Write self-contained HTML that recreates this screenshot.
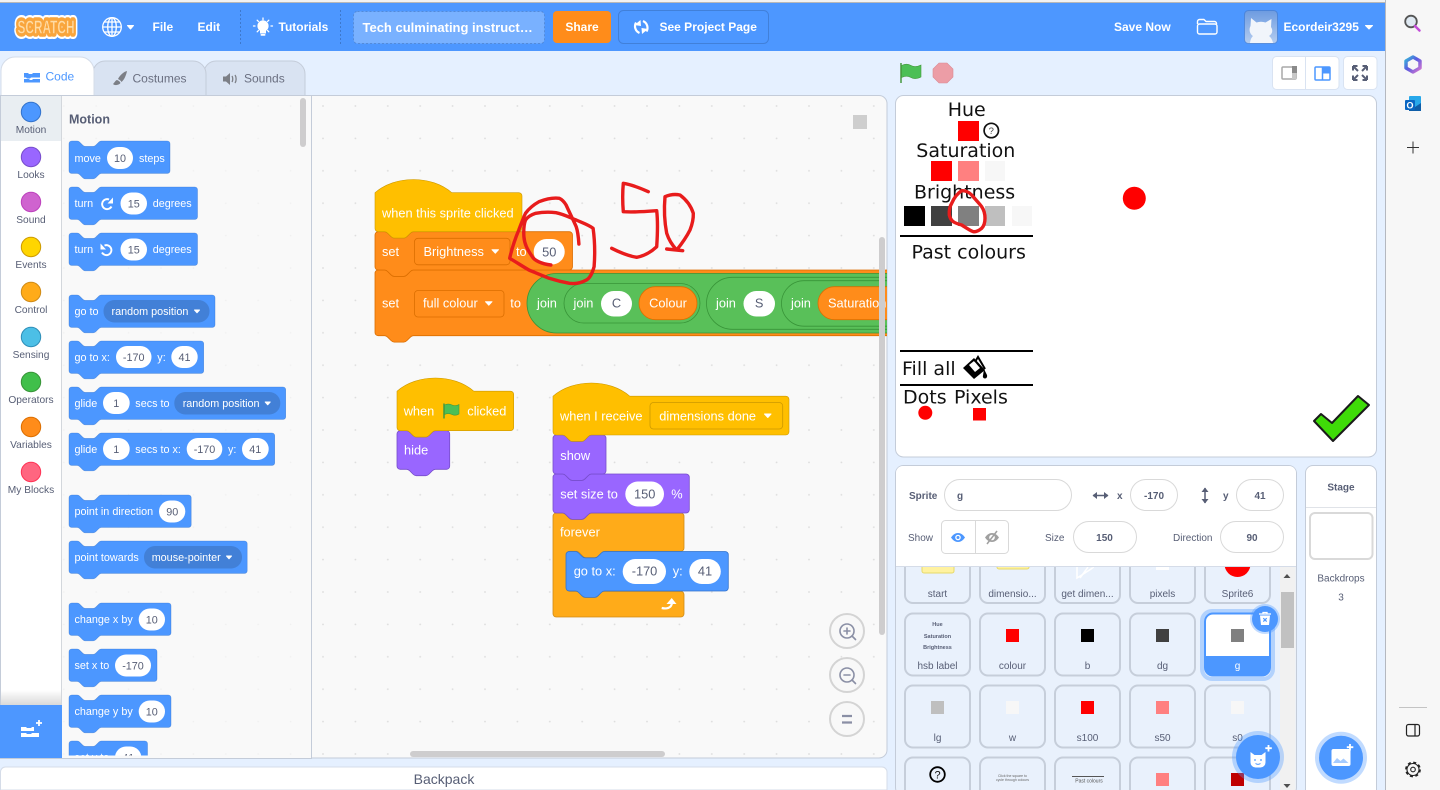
<!DOCTYPE html>
<html lang="en"><head><meta charset="utf-8"><title>Scratch Editor</title>
<style>
html,body{margin:0;padding:0;width:1440px;height:790px;overflow:hidden;background:#e5f0ff}
svg{display:block;position:absolute;left:0;top:0}
text{font-family:"Liberation Sans",Arial,sans-serif}
.h{font-size:12px;font-weight:700;fill:#fff}
.c{font-size:10.2px;fill:#575e75;text-anchor:middle}
.f{font-size:10.8px;fill:#fff}
.fn{font-size:10.8px;fill:#575e75;text-anchor:middle}
.w{font-size:12.8px;fill:#fff}
.wn{font-size:12.8px;fill:#575e75;text-anchor:middle}
.m{fill:#4c97ff;stroke:#3373cc;stroke-width:.6;stroke-opacity:.6}
.o{fill:#fff}
.dd{fill:#4280d7}
.ar{fill:#fff;stroke:#fff;stroke-width:1;stroke-linejoin:round}
.s{font-family:"DejaVu Sans",sans-serif;font-size:19px;fill:#111}
.l{font-size:10px;fill:#575e75}
.lb{font-size:10px;fill:#575e75;font-weight:700}
.lc{font-size:10px;fill:#575e75;text-anchor:middle}
.vb{font-size:10px;fill:#575e75;font-weight:700;text-anchor:middle}
.in{fill:#fff;stroke:#d9d9d9;stroke-width:1}
.t{fill:#e9f1fc;stroke:#c6ceda;stroke-width:2}
.red{fill:none;stroke:#e81c1c;stroke-width:3.4;stroke-linejoin:round;stroke-linecap:round}
</style></head><body>
<svg width="1440" height="790" viewBox="0 0 1440 790" xmlns="http://www.w3.org/2000/svg">
<defs>
<pattern id="d" x="322" y="105" width="32.4" height="32.4" patternUnits="userSpaceOnUse"><circle cx="1" cy="1" r=".9" fill="#dcdcdc"/></pattern>
<pattern id="d2" x="322" y="105" width="32.4" height="32.4" patternUnits="userSpaceOnUse"><circle cx="1" cy="1" r=".8" fill="#efefef"/></pattern>
<clipPath id="cf"><rect x="62" y="96" width="249" height="659.5"/></clipPath>
<clipPath id="cw"><path d="M312 96H879a8 8 0 0 1 8 8V750a8 8 0 0 1-8 8H312z"/></clipPath>
<clipPath id="cl"><rect x="896" y="567" width="400" height="223"/></clipPath>
<linearGradient id="sh" x1="0" y1="0" x2="0" y2="1"><stop offset="0" stop-color="#000" stop-opacity="0"/><stop offset="1" stop-color="#000" stop-opacity=".15"/></linearGradient>
<linearGradient id="av" x1="0" y1="0" x2="0" y2="1"><stop offset="0" stop-color="#6d9be0"/><stop offset="1" stop-color="#b5cdf0"/></linearGradient>
<linearGradient id="cp" x1="0" y1="0" x2="1" y2="1"><stop offset="0" stop-color="#35b8d8"/><stop offset=".45" stop-color="#5a5be0"/><stop offset="1" stop-color="#d878d0"/></linearGradient>
</defs>

<rect width="1440" height="790" fill="#e5f0ff"/>
<rect x="0" y="0" width="1385" height="2" fill="#f2f2f2"/>
<rect x="0" y="2" width="1385" height="1" fill="#b8b8b8"/>
<rect x="0" y="3" width="1385" height="48" fill="#4d97ff"/>
<rect x="1386" y="0" width="54" height="790" fill="#f7f7f7"/>
<rect x="1385" y="0" width="1" height="790" fill="#b4b8c0"/>

<!-- logo -->
<g font-size="18" font-weight="700" text-anchor="middle">
<text x="46" y="33.5" textLength="57" lengthAdjust="spacingAndGlyphs" fill="#fff" stroke="#fff" stroke-width="11" stroke-linejoin="round">SCRATCH</text>
<text x="46" y="33.5" textLength="57" lengthAdjust="spacingAndGlyphs" fill="#f9a53c" stroke="#f9a53c" stroke-width="6.5" stroke-linejoin="round">SCRATCH</text>
<text x="46" y="33.5" textLength="57" lengthAdjust="spacingAndGlyphs" fill="#ffdca6" stroke="#f9a53c" stroke-width=".5">SCRATCH</text>
</g>
<!-- globe -->
<g fill="none" stroke="#fff" stroke-width="1.3"><circle cx="112" cy="27" r="9.3"/><ellipse cx="112" cy="27" rx="4.3" ry="9.3"/><path d="M112 17.7V36.3M102.7 27H121.3M104 22h16M104 32h16"/></g>
<path d="M127.5 25.5h6l-3 3.5z" class="ar"/>
<text x="152.5" y="31" class="h">File</text>
<text x="197.5" y="31" class="h">Edit</text>
<path d="M240.5 10V44M340.5 10V44" stroke="#000" stroke-opacity=".2" stroke-dasharray="2 2"/>
<!-- bulb -->
<g fill="#fff"><circle cx="263" cy="26" r="5.6"/><path d="M260 30h6v3.5h-6z"/><rect x="260.5" y="34" width="5" height="1.8" rx=".9"/></g>
<path d="M263 18v1.8M255 26h-1.5M272.5 26H271M257.2 20.2l1.2 1.2M268.8 20.2l-1.2 1.2M257.2 31.8l1.2-1.2M268.8 31.8l-1.2-1.2" stroke="#fff" stroke-width="1.3" stroke-linecap="round"/>
<text x="278.5" y="31" class="h">Tutorials</text>
<rect x="353.5" y="11.5" width="191" height="32" rx="4" fill="#fff" fill-opacity=".25" stroke="#000" stroke-opacity=".15" stroke-dasharray="2 2"/>
<text x="362.5" y="32" font-size="13px" font-weight="700" fill="#fff">Tech culminating instruct…</text>
<rect x="553" y="11" width="58" height="32" rx="4" fill="#ff8c1a"/>
<text x="582" y="31" class="h" text-anchor="middle">Share</text>
<rect x="618.5" y="10.5" width="150" height="33" rx="5" fill="#4d97ff" stroke="#000" stroke-opacity=".15"/>
<path d="M639.5 33c-4.500-2-5.500-7-3.500-10.500" fill="none" stroke="#fff" stroke-width="2.200"/><path d="M634.500 25l6-5 .5 6z" fill="#fff"/>
<path d="M643 21c4.500 2 5.500 7 3.500 10.500" fill="none" stroke="#fff" stroke-width="2.200"/><path d="M648 29l-6 5-.5-6z" fill="#fff"/>
<text x="659.5" y="31" class="h">See Project Page</text>
<text x="1114" y="31" class="h">Save Now</text>
<g fill="none" stroke="#fff" stroke-width="1.4" stroke-linejoin="round"><path d="M1197.500 24v-2.500a2 2 0 0 1 2-2h4.500l2 2h8.500a2 2 0 0 1 2 2V24"/><rect x="1197.500" y="24" width="19.500" height="10" rx="2"/></g>
<rect x="1244.500" y="10.500" width="33" height="33" rx="4" fill="url(#av)" stroke="#3f77c9" stroke-opacity=".6"/>
<path d="M1251 18l5.500 4.500c3-1 6-1 9 0l6-3.500-.5 8c2.500 4 1 7-2 9 2 1.500 3.500 4 4 7h-23c.5-3 1-5 3-7-3-2-4.500-6-2.500-10z" fill="#f1f5fb"/>
<text x="1283.500" y="31" class="h">Ecordeir3295</text>
<path d="M1365.500 25.500h7l-3.500 3.500z" class="ar"/>

<!-- tabs -->
<path d="M204 96V73a12 12 0 0 1 12-12h76a13 13 0 0 1 13 13V96z" fill="#d9e3f2" stroke="#c4ccd9"/>
<path d="M93 96V73a12 12 0 0 1 12-12h88a13 13 0 0 1 13 13V96z" fill="#d9e3f2" stroke="#c4ccd9"/>
<path d="M1 96V71a14 14 0 0 1 14-14h65a14 14 0 0 1 14 14V96z" fill="#fff" stroke="#d5dce8"/>
<path d="M24 73h4l1 1h3l1-1h7v4.500h-9l-1 1h-3l-1-1h-2zM24 79h5l1 1h2l1-1h7v3.500H24z" fill="#4c97ff"/>
<text x="45.500" y="80.500" font-size="12px" fill="#4c97ff">Code</text>
<path d="M127 71c-3 .5-7 4-9 8 2 1 3 2 3.500 3 2.500-2 4.500-6 5.500-11zM117 80c-2 .5-2.500 3-4 4 2 2 6 1 7.500-1-.5-1.500-2-2.500-3.500-3z" fill="#7c7f86"/>
<text x="132.500" y="82.500" font-size="12px" fill="#6a6f80">Costumes</text>
<path d="M223 76.500h3l4-3.500v12l-4-3.500h-3z" fill="#7c7f86"/><path d="M232 76c1 1.500 1 4.500 0 6M235 75c1.500 2 1.500 6 0 8" stroke="#7c7f86" stroke-width="1.300" fill="none"/>
<text x="244" y="82.500" font-size="12px" fill="#6a6f80">Sounds</text>

<!-- palette -->
<rect x="0.500" y="95.500" width="311" height="663" fill="#f9f9f9" stroke="#c4ccd9"/>
<rect x="62" y="96" width="249" height="662" fill="url(#d2)"/>
<rect x="1" y="96" width="60" height="609" fill="#fff"/>
<rect x="1" y="96" width="60" height="45" fill="#e9eef2"/>
<rect x="1" y="690" width="60" height="15" fill="url(#sh)"/>
<rect x="61" y="96" width="1" height="662" fill="#d3d7dc"/>
<rect x="0" y="705" width="62" height="53" fill="#4d97ff"/>
<path d="M21 727h5l1 1h4l1-1h2v4H21zM21 733h5l1 1h4l1-1h7v4H21z" fill="#fff"/><path d="M39 720v6M36 723h6" stroke="#fff" stroke-width="1.800"/>
<g stroke-width="1">
<circle cx="31" cy="112" r="9.700" fill="#4c97ff" stroke="#3373cc"/>
<circle cx="31" cy="157" r="9.700" fill="#9966ff" stroke="#774dcb"/>
<circle cx="31" cy="202" r="9.700" fill="#cf63cf" stroke="#bd42bd"/>
<circle cx="31" cy="247" r="9.700" fill="#ffd500" stroke="#cc9900"/>
<circle cx="31" cy="292" r="9.700" fill="#ffab19" stroke="#cf8b17"/>
<circle cx="31" cy="337" r="9.700" fill="#4cbfe6" stroke="#2e8eb8"/>
<circle cx="31" cy="382" r="9.700" fill="#40bf4a" stroke="#389438"/>
<circle cx="31" cy="427" r="9.700" fill="#ff8c1a" stroke="#db6e00"/>
<circle cx="31" cy="472" r="9.700" fill="#ff6680" stroke="#ff3355"/>
</g>
<text x="31" y="133" class="c">Motion</text><text x="31" y="178" class="c">Looks</text><text x="31" y="223" class="c">Sound</text><text x="31" y="268" class="c">Events</text><text x="31" y="313" class="c">Control</text><text x="31" y="358" class="c">Sensing</text><text x="31" y="403" class="c">Operators</text><text x="31" y="448" class="c">Variables</text><text x="31" y="493" class="c">My Blocks</text>

<!-- flyout -->
<g clip-path="url(#cf)">
<text x="69" y="123.500" font-size="12.500px" font-weight="700" fill="#575e75">Motion</text>
<g id="fb">
<path class="m" transform="translate(69,141)" d="M0 2.700a2.700 2.700 0 0 1 2.700-2.700h5.400c1.300 0 2 .7 2.700 1.300l2.700 2.700c.7.7 1.300 1.400 2.700 1.400h8.100c1.400 0 2-.7 2.700-1.400l2.700-2.700c.7-.6 1.400-1.300 2.700-1.300H98.300a2.700 2.700 0 0 1 2.700 2.700V29.700a2.700 2.700 0 0 1-2.700 2.700H32.400c-1.300 0-2 .7-2.700 1.300l-2.700 2.700c-.7.7-1.400 1.400-2.700 1.400h-8.100c-1.400 0-2-.7-2.700-1.400l-2.700-2.700c-.7-.6-1.400-1.300-2.700-1.300H2.700a2.700 2.700 0 0 1-2.700-2.700z"/>
<path class="m" transform="translate(69,187)" d="M0 2.700a2.700 2.700 0 0 1 2.700-2.700h5.400c1.300 0 2 .7 2.700 1.300l2.700 2.700c.7.7 1.300 1.400 2.700 1.400h8.100c1.400 0 2-.7 2.700-1.400l2.700-2.700c.7-.6 1.400-1.300 2.700-1.300H125.800a2.700 2.700 0 0 1 2.700 2.700V29.700a2.700 2.700 0 0 1-2.700 2.700H32.400c-1.300 0-2 .7-2.700 1.300l-2.700 2.700c-.7.7-1.400 1.400-2.700 1.400h-8.100c-1.400 0-2-.7-2.700-1.400l-2.700-2.700c-.7-.6-1.400-1.300-2.700-1.300H2.700a2.700 2.700 0 0 1-2.700-2.700z"/>
<path class="m" transform="translate(69,233)" d="M0 2.700a2.700 2.700 0 0 1 2.700-2.700h5.400c1.300 0 2 .7 2.700 1.300l2.700 2.700c.7.7 1.300 1.400 2.700 1.400h8.100c1.400 0 2-.7 2.700-1.400l2.700-2.700c.7-.6 1.400-1.300 2.700-1.300H125.800a2.700 2.700 0 0 1 2.700 2.700V29.700a2.700 2.700 0 0 1-2.700 2.700H32.400c-1.300 0-2 .7-2.700 1.300l-2.700 2.700c-.7.7-1.400 1.400-2.700 1.400h-8.100c-1.400 0-2-.7-2.700-1.400l-2.700-2.700c-.7-.6-1.400-1.300-2.700-1.300H2.700a2.700 2.700 0 0 1-2.700-2.700z"/>
<path class="m" transform="translate(69,295)" d="M0 2.700a2.700 2.700 0 0 1 2.700-2.700h5.400c1.300 0 2 .7 2.700 1.300l2.700 2.700c.7.7 1.300 1.400 2.700 1.400h8.100c1.400 0 2-.7 2.700-1.400l2.700-2.700c.7-.6 1.400-1.300 2.700-1.300H143.300a2.700 2.700 0 0 1 2.700 2.700V29.700a2.700 2.700 0 0 1-2.700 2.700H32.400c-1.300 0-2 .7-2.700 1.300l-2.700 2.700c-.7.7-1.400 1.400-2.700 1.400h-8.100c-1.400 0-2-.7-2.700-1.400l-2.700-2.700c-.7-.6-1.400-1.300-2.700-1.300H2.700a2.700 2.700 0 0 1-2.700-2.700z"/>
<path class="m" transform="translate(69,341)" d="M0 2.700a2.700 2.700 0 0 1 2.700-2.700h5.400c1.300 0 2 .7 2.700 1.300l2.700 2.700c.7.7 1.300 1.400 2.700 1.400h8.100c1.400 0 2-.7 2.700-1.400l2.700-2.700c.7-.6 1.400-1.300 2.700-1.300H132a2.700 2.700 0 0 1 2.700 2.700V29.700a2.700 2.700 0 0 1-2.700 2.700H32.400c-1.300 0-2 .7-2.700 1.300l-2.700 2.700c-.7.7-1.400 1.400-2.700 1.400h-8.100c-1.400 0-2-.7-2.700-1.400l-2.700-2.700c-.7-.6-1.400-1.300-2.700-1.300H2.700a2.700 2.700 0 0 1-2.700-2.700z"/>
<path class="m" transform="translate(69,387)" d="M0 2.700a2.700 2.700 0 0 1 2.700-2.700h5.400c1.300 0 2 .7 2.700 1.300l2.700 2.700c.7.7 1.300 1.400 2.700 1.400h8.100c1.400 0 2-.7 2.700-1.400l2.700-2.700c.7-.6 1.400-1.300 2.700-1.300H214a2.700 2.700 0 0 1 2.700 2.700V29.700a2.700 2.700 0 0 1-2.700 2.700H32.400c-1.300 0-2 .7-2.700 1.300l-2.700 2.700c-.7.7-1.400 1.400-2.700 1.400h-8.100c-1.400 0-2-.7-2.700-1.400l-2.700-2.700c-.7-.6-1.400-1.300-2.700-1.300H2.700a2.700 2.700 0 0 1-2.700-2.700z"/>
<path class="m" transform="translate(69,433)" d="M0 2.700a2.700 2.700 0 0 1 2.700-2.700h5.400c1.300 0 2 .7 2.700 1.300l2.700 2.700c.7.7 1.300 1.400 2.700 1.400h8.100c1.400 0 2-.7 2.700-1.400l2.700-2.700c.7-.6 1.400-1.300 2.700-1.300H203a2.700 2.700 0 0 1 2.700 2.700V29.700a2.700 2.700 0 0 1-2.700 2.700H32.400c-1.300 0-2 .7-2.700 1.300l-2.700 2.700c-.7.7-1.400 1.400-2.700 1.400h-8.100c-1.400 0-2-.7-2.700-1.400l-2.700-2.700c-.7-.6-1.400-1.300-2.700-1.300H2.700a2.700 2.700 0 0 1-2.700-2.700z"/>
<path class="m" transform="translate(69,495)" d="M0 2.700a2.700 2.700 0 0 1 2.700-2.700h5.400c1.300 0 2 .7 2.700 1.300l2.700 2.700c.7.7 1.300 1.400 2.700 1.400h8.100c1.400 0 2-.7 2.700-1.400l2.700-2.700c.7-.6 1.400-1.300 2.700-1.300H119.500a2.700 2.700 0 0 1 2.700 2.700V29.700a2.700 2.700 0 0 1-2.700 2.700H32.400c-1.300 0-2 .7-2.700 1.300l-2.700 2.700c-.7.7-1.400 1.400-2.700 1.400h-8.100c-1.400 0-2-.7-2.700-1.400l-2.700-2.700c-.7-.6-1.400-1.300-2.700-1.300H2.700a2.700 2.700 0 0 1-2.700-2.700z"/>
<path class="m" transform="translate(69,541)" d="M0 2.700a2.700 2.700 0 0 1 2.700-2.700h5.400c1.300 0 2 .7 2.700 1.300l2.700 2.700c.7.7 1.300 1.400 2.700 1.400h8.100c1.400 0 2-.7 2.700-1.400l2.700-2.700c.7-.6 1.400-1.300 2.700-1.300H175.500a2.700 2.700 0 0 1 2.700 2.700V29.700a2.700 2.700 0 0 1-2.700 2.700H32.400c-1.300 0-2 .7-2.700 1.300l-2.700 2.700c-.7.7-1.400 1.400-2.700 1.400h-8.100c-1.400 0-2-.7-2.700-1.400l-2.700-2.700c-.7-.6-1.400-1.300-2.700-1.300H2.700a2.700 2.700 0 0 1-2.700-2.700z"/>
<path class="m" transform="translate(69,603)" d="M0 2.700a2.700 2.700 0 0 1 2.700-2.700h5.400c1.300 0 2 .7 2.700 1.300l2.700 2.700c.7.7 1.300 1.400 2.700 1.400h8.100c1.400 0 2-.7 2.700-1.400l2.700-2.700c.7-.6 1.400-1.300 2.700-1.300H99.300a2.700 2.700 0 0 1 2.700 2.700V29.700a2.700 2.700 0 0 1-2.700 2.700H32.400c-1.300 0-2 .7-2.700 1.300l-2.700 2.700c-.7.7-1.400 1.400-2.700 1.400h-8.100c-1.400 0-2-.7-2.700-1.400l-2.700-2.700c-.7-.6-1.400-1.300-2.700-1.300H2.700a2.700 2.700 0 0 1-2.700-2.700z"/>
<path class="m" transform="translate(69,649)" d="M0 2.700a2.700 2.700 0 0 1 2.700-2.700h5.400c1.300 0 2 .7 2.700 1.300l2.700 2.700c.7.7 1.300 1.400 2.700 1.400h8.100c1.400 0 2-.7 2.700-1.400l2.700-2.700c.7-.6 1.400-1.300 2.700-1.300H85.300a2.700 2.700 0 0 1 2.700 2.700V29.700a2.700 2.700 0 0 1-2.700 2.700H32.400c-1.300 0-2 .7-2.700 1.300l-2.700 2.700c-.7.7-1.400 1.400-2.700 1.400h-8.100c-1.400 0-2-.7-2.700-1.400l-2.700-2.700c-.7-.6-1.400-1.300-2.700-1.300H2.700a2.700 2.700 0 0 1-2.700-2.700z"/>
<path class="m" transform="translate(69,695)" d="M0 2.700a2.700 2.700 0 0 1 2.700-2.700h5.400c1.300 0 2 .7 2.700 1.300l2.700 2.700c.7.7 1.300 1.400 2.700 1.400h8.100c1.400 0 2-.7 2.700-1.400l2.700-2.700c.7-.6 1.400-1.300 2.700-1.300H99.300a2.700 2.700 0 0 1 2.700 2.700V29.700a2.700 2.700 0 0 1-2.700 2.700H32.400c-1.300 0-2 .7-2.700 1.300l-2.700 2.700c-.7.7-1.400 1.400-2.700 1.400h-8.100c-1.400 0-2-.7-2.700-1.400l-2.700-2.700c-.7-.6-1.400-1.300-2.700-1.300H2.700a2.700 2.700 0 0 1-2.700-2.700z"/>
<path class="m" transform="translate(69,741)" d="M0 2.700a2.700 2.700 0 0 1 2.700-2.700h5.400c1.300 0 2 .7 2.700 1.300l2.700 2.700c.7.7 1.300 1.400 2.700 1.400h8.100c1.400 0 2-.7 2.700-1.400l2.700-2.700c.7-.6 1.400-1.300 2.700-1.300H75.800a2.700 2.700 0 0 1 2.700 2.700V29.700a2.700 2.700 0 0 1-2.700 2.700H2.700a2.700 2.700 0 0 1-2.700-2.700z"/>
</g>
<!-- move -->
<text x="74.500" y="162" class="f">move</text><rect class="o" x="107" y="147" width="26" height="22" rx="11"/><text x="120" y="162" class="fn">10</text><text x="139" y="162" class="f">steps</text>
<!-- turn -->
<text x="74.500" y="207" class="f">turn</text>
<path d="M111.500 206.500a5 5 0 1 1-2.500-7" fill="none" stroke="#fff" stroke-width="1.900"/><path d="M113 197.500v6h-5.500z" fill="#fff"/>
<rect class="o" x="120.500" y="192.500" width="26.500" height="22" rx="11"/><text x="133.700" y="207.500" class="fn">15</text><text x="152.700" y="207" class="f">degrees</text>
<text x="74.500" y="253" class="f">turn</text>
<path d="M102 252.500a5 5 0 1 0 2.500-7" fill="none" stroke="#fff" stroke-width="1.900"/><path d="M100.500 243.500v6h5.500z" fill="#fff"/>
<rect class="o" x="120.500" y="238.500" width="26.500" height="22" rx="11"/><text x="133.700" y="253.500" class="fn">15</text><text x="152.700" y="253" class="f">degrees</text>
<!-- go to -->
<text x="74.500" y="315" class="f">go to</text><rect class="dd" x="103.500" y="300" width="106" height="22.500" rx="11"/><text x="111.500" y="315" class="f">random position</text><path class="ar" d="M194.500 310h5l-2.500 2.800z"/>
<text x="74.500" y="361" class="f">go to x:</text><rect class="o" x="116" y="346" width="35.500" height="22" rx="11"/><text x="133.700" y="361" class="fn">-170</text><text x="157.300" y="361" class="f">y:</text><rect class="o" x="171.300" y="346" width="26.400" height="22" rx="11"/><text x="184.500" y="361" class="fn">41</text>
<text x="74.500" y="407" class="f">glide</text><rect class="o" x="103" y="392" width="26.700" height="22" rx="11"/><text x="116.300" y="407" class="fn">1</text><text x="135.300" y="407" class="f">secs to</text><rect class="dd" x="174.300" y="392" width="106" height="22.500" rx="11"/><text x="182.700" y="407" class="f">random position</text><path class="ar" d="M265.200 402h5l-2.500 2.800z"/>
<text x="74.500" y="453" class="f">glide</text><rect class="o" x="103" y="438" width="26.700" height="22" rx="11"/><text x="116.300" y="453" class="fn">1</text><text x="135.300" y="453" class="f">secs to x:</text><rect class="o" x="186.700" y="438" width="35.600" height="22" rx="11"/><text x="204.500" y="453" class="fn">-170</text><text x="228" y="453" class="f">y:</text><rect class="o" x="242" y="438" width="26.700" height="22" rx="11"/><text x="255.300" y="453" class="fn">41</text>
<text x="74.500" y="515" class="f">point in direction</text><rect class="o" x="159" y="500.500" width="26.300" height="22" rx="11"/><text x="172.200" y="515.500" class="fn">90</text>
<text x="74.500" y="561" class="f">point towards</text><rect class="dd" x="144" y="546" width="98" height="22.500" rx="11"/><text x="151.700" y="561" class="f">mouse-pointer</text><path class="ar" d="M226.500 556h5l-2.500 2.800z"/>
<text x="74.500" y="623" class="f">change x by</text><rect class="o" x="138.700" y="608.500" width="26.300" height="22" rx="11"/><text x="151.800" y="623.500" class="fn">10</text>
<text x="74.500" y="669" class="f">set x to</text><rect class="o" x="115" y="654.500" width="36" height="22" rx="11"/><text x="133" y="669.500" class="fn">-170</text>
<text x="74.500" y="715" class="f">change y by</text><rect class="o" x="138.700" y="700.500" width="26.300" height="22" rx="11"/><text x="151.800" y="715.500" class="fn">10</text>
<text x="74.500" y="761" class="f">set y to</text><rect class="o" x="115" y="746.500" width="26.300" height="22" rx="11"/><text x="128.200" y="761.500" class="fn">41</text>
</g>
<rect x="300" y="98" width="6" height="49" rx="3" fill="#cecdce"/>

<!-- workspace -->
<path d="M311.500 95.500H879a8 8 0 0 1 8 8V750a8 8 0 0 1-8 8H311.500z" fill="#f9f9f9" stroke="#c4ccd9"/>
<g clip-path="url(#cw)">
<rect x="312" y="96" width="575" height="662" fill="url(#d)"/>
<rect x="853" y="115" width="14" height="14" fill="#cecece"/>
<!-- set full colour -->
<path transform="translate(375,270)" fill="#ff8c1a" stroke="#db6e00" stroke-width=".8" d="M0 3.200a3.200 3.200 0 0 1 3.200-3.200h6.400c1.600 0 2.400.8 3.200 1.600l3.200 3.200c.8.8 1.600 1.600 3.200 1.600h9.600c1.600 0 2.400-.8 3.200-1.600l3.200-3.200c.8-.8 1.600-1.600 3.200-1.600H600V65.700H38.400c-1.600 0-2.400.8-3.200 1.600l-3.200 3.200c-.8.8-1.600 1.600-3.200 1.600h-9.600c-1.600 0-2.400-.8-3.200-1.600l-3.200-3.200c-.8-.8-1.600-1.600-3.200-1.600H3.200a3.200 3.200 0 0 1-3.200-3.200z"/>
<text x="382" y="307.700" class="w">set</text>
<rect x="414.500" y="290.500" width="89.500" height="26.500" rx="3.500" fill="#ff8c1a" stroke="#db6e00" stroke-width=".8"/>
<text x="423" y="307.700" class="w">full colour</text><path class="ar" d="M485.500 301.700h6.500l-3.200 3.500z"/>
<text x="510.300" y="307.700" class="w">to</text>
<rect x="527" y="273.500" width="500" height="59.500" rx="29.700" fill="#59c059" stroke="#389438" stroke-width=".8"/>
<text x="537" y="307.700" class="w">join</text>
<rect x="564" y="283.500" width="136" height="39.500" rx="19.700" fill="#59c059" stroke="#389438" stroke-width=".8"/>
<text x="573.500" y="307.700" class="w">join</text>
<rect x="601" y="291" width="31" height="25.500" rx="12.700" fill="#fff"/><text x="616.500" y="307.700" class="wn">C</text>
<rect x="639" y="286.700" width="58" height="33" rx="16.500" fill="#ff8c1a" stroke="#db6e00" stroke-width=".8"/><text x="668" y="307.700" class="w" text-anchor="middle">Colour</text>
<rect x="706.500" y="277.300" width="400" height="52" rx="26" fill="#59c059" stroke="#389438" stroke-width=".8"/>
<text x="716" y="307.700" class="w">join</text>
<rect x="743.500" y="291" width="31.500" height="25.500" rx="12.700" fill="#fff"/><text x="759.200" y="307.700" class="wn">S</text>
<rect x="781.500" y="280.700" width="400" height="45.500" rx="22.700" fill="#59c059" stroke="#389438" stroke-width=".8"/>
<text x="791" y="307.700" class="w">join</text>
<rect x="818" y="286.700" width="200" height="33" rx="16.500" fill="#ff8c1a" stroke="#db6e00" stroke-width=".8"/><text x="828" y="307.700" class="w">Saturation</text>
<!-- set brightness -->
<path transform="translate(375,231.700)" fill="#ff8c1a" stroke="#db6e00" stroke-width=".8" d="M0 3.200a3.200 3.200 0 0 1 3.200-3.200h6.400c1.600 0 2.400.8 3.200 1.600l3.200 3.200c.8.8 1.600 1.600 3.200 1.600h9.600c1.600 0 2.400-.8 3.200-1.600l3.200-3.200c.8-.8 1.600-1.600 3.200-1.600H194.300a3.200 3.200 0 0 1 3.200 3.200V35.100a3.200 3.200 0 0 1-3.200 3.200H38.400c-1.600 0-2.400.8-3.200 1.600l-3.200 3.200c-.8.8-1.600 1.600-3.200 1.600h-9.600c-1.600 0-2.400-.8-3.200-1.600l-3.200-3.200c-.8-.8-1.600-1.600-3.200-1.600H3.200a3.200 3.200 0 0 1-3.200-3.200z"/>
<text x="382" y="256" class="w">set</text>
<rect x="414.500" y="238.300" width="95.500" height="26.500" rx="3.500" fill="#ff8c1a" stroke="#db6e00" stroke-width=".8"/>
<text x="423.500" y="256" class="w">Brightness</text><path class="ar" d="M492 249.700h6.500l-3.200 3.500z"/>
<text x="516" y="256" class="w">to</text>
<rect x="533.700" y="239" width="31" height="25.500" rx="12.700" fill="#fff"/><text x="549.200" y="256.300" class="wn">50</text>
<!-- hat 1 -->
<path transform="translate(375,179.200)" fill="#ffbf00" stroke="#cc9900" stroke-width=".6" d="M0 13.500c20-17.600 56.800-17.600 76.800 0H143.800a3.200 3.200 0 0 1 3.200 3.200V49.300a3.200 3.200 0 0 1-3.200 3.200H38.400c-1.600 0-2.400.8-3.200 1.600l-3.200 3.200c-.8.8-1.600 1.600-3.200 1.600h-9.600c-1.600 0-2.400-.8-3.200-1.600l-3.200-3.200c-.8-.8-1.600-1.600-3.200-1.600H3.200a3.200 3.200 0 0 1-3.200-3.200z"/>
<text x="382" y="217.700" class="w">when this sprite clicked</text>

<!-- stack 2 -->
<path transform="translate(397,430.700)" fill="#9966ff" stroke="#774dcb" stroke-width=".8" d="M0 3.200a3.200 3.200 0 0 1 3.200-3.200h6.400c1.600 0 2.400.8 3.200 1.600l3.200 3.200c.8.8 1.600 1.600 3.200 1.600h9.600c1.600 0 2.400-.8 3.200-1.600l3.200-3.200c.8-.8 1.600-1.600 3.200-1.600H49.500a3.200 3.200 0 0 1 3.200 3.200V35.400a3.200 3.200 0 0 1-3.200 3.200H38.400c-1.600 0-2.400.8-3.200 1.600l-3.200 3.200c-.8.8-1.600 1.600-3.200 1.600h-9.600c-1.600 0-2.400-.8-3.200-1.600l-3.200-3.200c-.8-.8-1.600-1.600-3.200-1.600H3.200a3.200 3.200 0 0 1-3.200-3.200z"/>
<text x="404" y="454.500" class="w">hide</text>
<path transform="translate(397,377.700)" fill="#ffbf00" stroke="#cc9900" stroke-width=".6" d="M0 13.500c20-17.600 56.800-17.600 76.800 0H113.500a3.200 3.200 0 0 1 3.200 3.200V49.800a3.200 3.200 0 0 1-3.200 3.200H38.400c-1.600 0-2.400.8-3.200 1.600l-3.200 3.200c-.8.8-1.600 1.600-3.200 1.600h-9.600c-1.600 0-2.400-.8-3.200-1.600l-3.200-3.200c-.8-.8-1.600-1.600-3.200-1.600H3.200a3.200 3.200 0 0 1-3.200-3.200z"/>
<text x="403.700" y="415.500" class="w">when</text>
<path d="M444 403.500v15" stroke="#45993d" stroke-width="1.500"/><path d="M444.500 405c3-1.500 5.500-1 7.500 0s4.500 1 7-.5v9.500c-2.500 1.500-5 1.500-7 .5s-4.500-1.500-7.500 0z" fill="#4cbf56" stroke="#45993d" stroke-width=".6"/>
<text x="467.300" y="415.500" class="w">clicked</text>

<!-- stack 3 -->
<path transform="translate(553,513)" fill="#ffab19" stroke="#cf8b17" stroke-width=".8" d="M0 3.200a3.200 3.200 0 0 1 3.200-3.200h6.400c1.600 0 2.400.8 3.200 1.600l3.200 3.200c.8.8 1.600 1.600 3.200 1.600h9.600c1.600 0 2.400-.8 3.200-1.600l3.200-3.200c.8-.8 1.600-1.600 3.200-1.600H127.800a3.200 3.200 0 0 1 3.200 3.200V35.100a3.200 3.200 0 0 1-3.200 3.200H52.100c-1.600 0-2.400.8-3.200 1.600l-3.200 3.200c-.8.8-1.600 1.600-3.200 1.600h-9.600c-1.600 0-2.400-.8-3.200-1.600l-3.200-3.200c-.8-.8-1.600-1.600-3.200-1.600H16.900a3.200 3.200 0 0 0-3.200 3.200V75.100a3.200 3.200 0 0 0 3.200 3.200H127.800a3.200 3.200 0 0 1 3.200 3.200V100.800a3.200 3.200 0 0 1-3.200 3.200H3.200a3.200 3.200 0 0 1-3.200-3.200z"/>
<text x="560" y="536.500" class="w">forever</text>
<path d="M661.700 608c4.500 1 9.500.5 10.300-5" fill="none" stroke="#fff" stroke-width="2.200"/><path d="M671.700 598l-5.200 6h10z" fill="#fff"/>
<path transform="translate(566,551.500)" fill="#4c97ff" stroke="#3373cc" stroke-width=".8" d="M0 3.200a3.200 3.200 0 0 1 3.200-3.200h6.400c1.600 0 2.400.8 3.200 1.600l3.200 3.200c.8.800 1.600 1.600 3.200 1.600h9.600c1.600 0 2.400-.8 3.200-1.600l3.200-3.200c.8-.8 1.600-1.600 3.200-1.600H159.100a3.200 3.200 0 0 1 3.200 3.200V36.300a3.200 3.200 0 0 1-3.200 3.200H38.400c-1.600 0-2.400.8-3.200 1.600l-3.200 3.200c-.8.8-1.600 1.600-3.200 1.600h-9.600c-1.600 0-2.400-.8-3.200-1.600l-3.200-3.200c-.8-.8-1.600-1.600-3.200-1.600H3.200a3.200 3.200 0 0 1-3.200-3.200z"/>
<text x="573.700" y="575.500" class="w">go to x:</text>
<rect x="622.700" y="559" width="43.300" height="25" rx="12.500" fill="#fff"/><text x="644.500" y="575.500" class="wn">-170</text>
<text x="672.700" y="575.500" class="w">y:</text>
<rect x="689.300" y="559" width="31.500" height="25" rx="12.500" fill="#fff"/><text x="705" y="575.500" class="wn">41</text>
<path transform="translate(553,474)" fill="#9966ff" stroke="#774dcb" stroke-width=".8" d="M0 3.200a3.200 3.200 0 0 1 3.200-3.200h6.400c1.600 0 2.400.8 3.200 1.600l3.200 3.200c.8.8 1.600 1.600 3.200 1.600h9.600c1.600 0 2.400-.8 3.200-1.600l3.200-3.200c.8-.8 1.600-1.600 3.200-1.600H133.100a3.200 3.200 0 0 1 3.200 3.200V35.800a3.200 3.200 0 0 1-3.200 3.200H38.400c-1.600 0-2.400.8-3.200 1.600l-3.200 3.200c-.8.8-1.600 1.600-3.200 1.600h-9.600c-1.600 0-2.400-.8-3.200-1.600l-3.200-3.200c-.8-.8-1.600-1.600-3.200-1.600H3.200a3.200 3.200 0 0 1-3.200-3.200z"/>
<text x="560.300" y="498.500" class="w">set size to</text>
<rect x="625.300" y="481.500" width="38.700" height="25" rx="12.500" fill="#fff"/><text x="644.700" y="498.500" class="wn">150</text>
<text x="671.300" y="498.500" class="w">%</text>
<path transform="translate(553,435)" fill="#9966ff" stroke="#774dcb" stroke-width=".8" d="M0 3.200a3.200 3.200 0 0 1 3.200-3.200h6.400c1.600 0 2.400.8 3.200 1.600l3.200 3.200c.8.8 1.600 1.600 3.200 1.600h9.600c1.600 0 2.400-.8 3.200-1.600l3.200-3.200c.8-.8 1.600-1.600 3.200-1.600H49.800a3.200 3.200 0 0 1 3.200 3.200V35.800a3.200 3.200 0 0 1-3.200 3.200H38.400c-1.600 0-2.400.8-3.200 1.600l-3.200 3.200c-.8.8-1.600 1.600-3.200 1.600h-9.600c-1.600 0-2.400-.8-3.200-1.600l-3.200-3.200c-.8-.8-1.600-1.600-3.200-1.600H3.200a3.200 3.200 0 0 1-3.200-3.200z"/>
<text x="560.300" y="460" class="w">show</text>
<path transform="translate(553,382.700)" fill="#ffbf00" stroke="#cc9900" stroke-width=".6" d="M0 13.500c20-17.600 56.800-17.600 76.800 0H232.800a3.200 3.200 0 0 1 3.200 3.200V49.100a3.200 3.200 0 0 1-3.200 3.200H38.400c-1.600 0-2.400.8-3.200 1.600l-3.200 3.200c-.8.8-1.600 1.600-3.200 1.600h-9.600c-1.600 0-2.400-.8-3.200-1.600l-3.200-3.200c-.8-.8-1.600-1.600-3.200-1.600H3.200a3.200 3.200 0 0 1-3.200-3.200z"/>
<text x="560" y="420.500" class="w">when I receive</text>
<rect x="650" y="402.500" width="132.700" height="26.500" rx="3.500" fill="#ffbf00" stroke="#cc9900" stroke-width=".8"/>
<text x="659.300" y="420.500" class="w">dimensions done</text><path class="ar" d="M764.500 414h6.500l-3.200 3.500z"/>

<!-- scrollbars -->
<rect x="879" y="237" width="6" height="398" rx="3" fill="#cecdce"/>
<rect x="410" y="751" width="255" height="6" rx="3" fill="#cecdce"/>
</g>
<!-- zoom controls -->
<g fill="#f8f8f8" stroke="#d4d4d4" stroke-width="2"><circle cx="847" cy="631" r="17"/><circle cx="847" cy="675" r="17"/><circle cx="847" cy="719" r="17"/></g>
<g fill="none" stroke="#8a8fa5" stroke-width="1.600" stroke-linecap="round"><circle cx="847" cy="631" r="7"/><path d="M852 636l3.500 3.500M844 631h6M847 628v6"/><circle cx="847" cy="675" r="7"/><path d="M852 680l3.500 3.500M844 675h6"/></g>
<path d="M842 716h10M842 722.500h10" stroke="#8a8fa5" stroke-width="2.200"/>

<!-- handwriting 1 -->
<path class="red" d="M550.900 265C541 264 534 260 532.300 256.700C527 249 524.500 244 523.900 236.700C523.500 230 524 224 525.500 220C528 216.500 532 214.500 535.700 213.300C543 212 550 212 556 212.700C563 214 570 217.500 576.200 220C583 223 589 225 593.100 228.300C595 242 595 255 594.100 266.700C592 274 590 278 586.400 280C581 283 575 284 569.500 283.300C562 282 556 280.500 549.200 278.300C542 275.500 535 272.500 528.900 270C522 266 516 262 509.700 258.300C512 248 515 239 518.800 230C521 224 523 218.500 525.500 213.300C529 208.500 534 204.500 539 201.700C546 199 553 197.500 559.300 198.300C562 199.500 564 201.500 566.100 205C569 211.500 573 219.500 576.200 226.700C578 232 578.500 238 578.900 244"/>
<path class="red" d="M648.300 191.700C640 188 631 184.500 623.300 183.300C622.500 192 622.500 202 623.300 211.700C634 212.500 646 211.500 656.700 210.700C658 222 657.500 235 656.700 246.700C651 252 644 256 636.700 257.300C628 256 619 252 611.700 248.300"/>
<path class="red" d="M666.700 249L682.700 250.700L676.700 250C672 245 668.500 239 666.700 233.300C664.500 222 664 208 665 196.700C670 194.500 675 194 680 195C686 199.500 691 206 693.300 213.300C693.500 219 692 225 690 230C686.500 237 681.500 244 676.700 250"/>

<!-- backpack -->
<path d="M0.500 790V772a5 5 0 0 1 5-5H882a5 5 0 0 1 5 5V790z" fill="#fff" stroke="#d5dce8"/>
<text x="444" y="784" font-size="14px" fill="#575e75" text-anchor="middle">Backpack</text>

<!-- stage controls -->
<path d="M901 63v20" stroke="#45993d" stroke-width="1.500"/><path d="M901.500 65.500c4-2 7-1.500 9.500 0s6 1.500 10-.5v12c-4 2-7.500 2-10 .5s-5.500-2-9.500 0z" fill="#4cbf56" stroke="#45993d" stroke-width=".6"/>
<path d="M939 63h8l6 6v8l-6 6h-8l-6-6v-8z" fill="#ec9da6" stroke="#d98a94" stroke-width=".6"/>
<rect x="1272.500" y="56.500" width="66.500" height="33" rx="4" fill="#fff" stroke="#d9e3f2"/>
<path d="M1305.500 57v32" stroke="#d9e3f2"/>
<rect x="1282" y="67" width="14" height="12" rx="1" fill="none" stroke="#a9a9a9" stroke-width="1.500"/><rect x="1292" y="66" width="5" height="7" fill="#8a8a8a"/><rect x="1292" y="73" width="4" height="6" fill="#c8c8c8"/>
<rect x="1315" y="67" width="15" height="13" rx="1" fill="#fff" stroke="#4c97ff" stroke-width="1.500"/><rect x="1322.500" y="67" width="7.500" height="6.500" fill="#4c97ff"/><path d="M1322.500 67v13" stroke="#4c97ff" stroke-width="1.500"/>
<rect x="1343.500" y="56.500" width="33.500" height="33" rx="4" fill="#fff" stroke="#d9e3f2"/>
<path d="M1353 66l5 5m-5-5v4.500m0-4.500h4.500M1367 66l-5 5m5-5v4.500m0-4.500h-4.500M1353 80l5-5m-5 5v-4.500m0 4.500h4.500M1367 80l-5-5m5 5v-4.500m0 4.500h-4.500" stroke="#575e75" stroke-width="2" fill="none"/>

<!-- stage -->
<rect x="895.500" y="95.500" width="481" height="361.500" rx="8" fill="#fff" stroke="#c4ccd9"/>
<text x="947.700" y="116" class="s">Hue</text>
<rect x="958" y="121" width="21" height="20" fill="#f00"/>
<circle cx="991.300" cy="130.500" r="7.200" fill="#fff" stroke="#111" stroke-width="1.700"/><text x="991.300" y="134" font-size="9.500px" fill="#444" text-anchor="middle">?</text>
<text x="916.300" y="157" class="s">Saturation</text>
<rect x="931" y="161" width="21" height="20" fill="#f00"/><rect x="958" y="161" width="21" height="20" fill="#ff8080"/><rect x="985" y="161" width="20" height="20" fill="#f7f7f7"/>
<text x="914" y="198.500" class="s">Brightness</text>
<rect x="904" y="206" width="21" height="20" fill="#000"/><rect x="931" y="206" width="21" height="20" fill="#404040"/><rect x="958" y="206" width="21" height="20" fill="#808080"/><rect x="985" y="206" width="20" height="20" fill="#bfbfbf"/><rect x="1012" y="206" width="20" height="20" fill="#f7f7f7"/>
<rect x="900" y="235" width="133" height="2" fill="#000"/>
<text x="911.500" y="258.500" class="s">Past colours</text>
<rect x="900" y="350" width="133" height="2" fill="#000"/>
<text x="902" y="375" class="s">Fill all</text>
<path d="M963 368l11-10 11 12-11 9z" fill="#000"/><path d="M969 365l5-4 6 7-5 4z" fill="#fff"/><path d="M975 362l3-5 7 12" fill="none" stroke="#000" stroke-width="2"/><path d="M984 369l3 6c.5 2-.5 3.500-2 3.500s-2.500-1.500-2-3z" fill="#000"/>
<rect x="900" y="384" width="133" height="2" fill="#000"/>
<text x="903" y="403.500" class="s">Dots</text><text x="954" y="403.500" class="s">Pixels</text>
<circle cx="925.300" cy="412.800" r="7" fill="#f00"/><rect x="973" y="408" width="13" height="12.500" fill="#f00"/>
<circle cx="1134.300" cy="198.300" r="11.500" fill="#f00"/>
<path d="M1314 421l7-7 11 9 26-27 11 9-36 36z" fill="#3fdb08" stroke="#1a1a1a" stroke-width="2" stroke-linejoin="round"/>
<path class="red" d="M949.300 215C949 210 950 206 951.700 203.300C954 198 958 193 961.700 190.700C965 190.500 969 192 971.700 195C975 199 979 203 981.700 206.700C984 210 985 214 985 218.300C985 222 984 226 981.700 228.300C979 230.500 976 232 973.300 231.700C969 230 965 227 961.700 225C958 224 955 223 953.300 221.700C951 220 950 218 949.300 215"/>

<!-- sprite pane -->
<rect x="895.500" y="465.500" width="401" height="330" rx="8" fill="#e9f1fc" stroke="#c4ccd9"/>
<g clip-path="url(#cl)">
<g class="t">
<rect x="905" y="541" width="65" height="62" rx="8"/><rect x="980" y="541" width="65" height="62" rx="8"/><rect x="1055" y="541" width="65" height="62" rx="8"/><rect x="1130" y="541" width="65" height="62" rx="8"/><rect x="1205" y="541" width="65" height="62" rx="8"/>
<rect x="905" y="613.500" width="65" height="62" rx="8"/><rect x="980" y="613.500" width="65" height="62" rx="8"/><rect x="1055" y="613.500" width="65" height="62" rx="8"/><rect x="1130" y="613.500" width="65" height="62" rx="8"/>
<rect x="905" y="685.500" width="65" height="62" rx="8"/><rect x="980" y="685.500" width="65" height="62" rx="8"/><rect x="1055" y="685.500" width="65" height="62" rx="8"/><rect x="1130" y="685.500" width="65" height="62" rx="8"/><rect x="1205" y="685.500" width="65" height="62" rx="8"/>
<rect x="905" y="757.500" width="65" height="62" rx="8"/><rect x="980" y="757.500" width="65" height="62" rx="8"/><rect x="1055" y="757.500" width="65" height="62" rx="8"/><rect x="1130" y="757.500" width="65" height="62" rx="8"/><rect x="1205" y="757.500" width="65" height="62" rx="8"/>
</g>
<rect x="922" y="560" width="32" height="13" rx="2" fill="#fff2a0" stroke="#e6d96a"/>
<rect x="997" y="560" width="32" height="9" rx="2" fill="#fff2a0" stroke="#e6d96a"/>
<path d="M1077 567v11l11-7c3-2 6-4 5-4M1080 578l8-11" stroke="#fff" stroke-width="1.500" fill="none"/>
<rect x="1156" y="560" width="13" height="10" fill="#fff"/>
<circle cx="1237.500" cy="564" r="13" fill="#f00"/>
<text x="937.500" y="597" class="lc">start</text><text x="1012.500" y="597" class="lc">dimensio...</text><text x="1087.500" y="597" class="lc">get dimen...</text><text x="1162.500" y="597" class="lc">pixels</text><text x="1237.500" y="597" class="lc">Sprite6</text>
<g font-size="5.500px" font-weight="700" fill="#575e75" text-anchor="middle"><text x="937.500" y="626">Hue</text><text x="937.500" y="638">Saturation</text><text x="937.500" y="649">Brightness</text></g>
<text x="937.500" y="669" class="lc">hsb label</text>
<rect x="1006" y="629" width="13" height="13" fill="#f00"/><text x="1012.500" y="669" class="lc">colour</text>
<rect x="1081" y="629" width="13" height="13" fill="#000"/><text x="1087.500" y="669" class="lc">b</text>
<rect x="1156" y="629" width="13" height="13" fill="#404040"/><text x="1162.500" y="669" class="lc">dg</text>
<rect x="931" y="701" width="13" height="13" fill="#bfbfbf"/><text x="937.500" y="741" class="lc">lg</text>
<rect x="1006" y="701" width="13" height="13" fill="#f7f7f7"/><text x="1012.500" y="741" class="lc">w</text>
<rect x="1081" y="701" width="13" height="13" fill="#f00"/><text x="1087.500" y="741" class="lc">s100</text>
<rect x="1156" y="701" width="13" height="13" fill="#ff8080"/><text x="1162.500" y="741" class="lc">s50</text>
<rect x="1231" y="701" width="13" height="13" fill="#f7f7f7"/><text x="1237.500" y="741" class="lc">s0</text>
<circle cx="937.500" cy="774.500" r="7.300" fill="none" stroke="#000" stroke-width="1.800"/><text x="937.500" y="778.500" font-size="11px" fill="#111" text-anchor="middle">?</text>
<g font-size="3.500px" fill="#666" text-anchor="middle"><text x="1012.500" y="777">Click the square to</text><text x="1012.500" y="781">cycle through colours</text></g>
<rect x="1072" y="776" width="32" height="1" fill="#555"/><text x="1089" y="782.500" font-size="5px" fill="#555" text-anchor="middle">Past colours</text>
<rect x="1156" y="773" width="13" height="13" fill="#ff8080"/>
<rect x="1231" y="773" width="13" height="13" fill="#bf0000"/>
</g>
<!-- selected tile -->
<rect x="1202" y="611" width="71" height="68" rx="10" fill="none" stroke="#4c97ff" stroke-opacity=".35" stroke-width="4"/>
<rect x="1205" y="613.500" width="65" height="62" rx="8" fill="#fff" stroke="#4c97ff" stroke-width="2"/>
<path d="M1204.500 656H1270.500V668a8 8 0 0 1-8 8H1212.500a8 8 0 0 1-8-8z" fill="#4c97ff"/>
<rect x="1231" y="629" width="13" height="13" fill="#808080"/>
<text x="1237.500" y="669" font-size="10px" fill="#fff" text-anchor="middle">g</text>
<circle cx="1265" cy="619" r="15" fill="#4c97ff" fill-opacity=".35"/><circle cx="1265" cy="619" r="13" fill="#4c97ff"/>
<path d="M1259 614h12M1263 614v-1.500h4v1.500" stroke="#fff" stroke-width="1.300" fill="none"/><path d="M1260 615.500h10l-1 9.500h-8z" fill="#fff"/><path d="M1263.300 618.200l3.400 3.400m0-3.400l-3.400 3.400" stroke="#4c97ff" stroke-width="1.200"/>
<!-- scrollbar -->
<rect x="1280" y="567" width="15.500" height="223" fill="#f1f1f1"/>
<path d="M1283.500 578l3.500-4 3.500 4z" fill="#505050"/><path d="M1283.500 784l3.500 4 3.500-4z" fill="#505050"/>
<rect x="1281" y="592" width="13" height="56" fill="#c1c1c1"/>
<!-- info -->
<path d="M896 567V473a7 7 0 0 1 7-7H1289a7 7 0 0 1 7 7V567z" fill="#fff"/>
<path d="M896 566.500H1296" stroke="#d5dce8"/>
<text x="909" y="499" class="lb">Sprite</text>
<rect class="in" x="944.500" y="479.500" width="127" height="31" rx="15.500"/><text x="957" y="499" class="lb">g</text>
<path d="M1093 495.500h15" stroke="#575e75" stroke-width="1.500"/><path d="M1097 492l-4.500 3.500 4.500 3.500zM1104 492l4.500 3.500-4.500 3.500z" fill="#575e75"/>
<text x="1117" y="499" class="lb">x</text>
<rect class="in" x="1130.500" y="479.500" width="47" height="31" rx="15.500"/><text x="1154" y="499" class="vb">-170</text>
<path d="M1205 488v15" stroke="#575e75" stroke-width="1.500"/><path d="M1201.500 492l3.500-4.500 3.500 4.500zM1201.500 499l3.500 4.500 3.500-4.500z" fill="#575e75"/>
<text x="1223" y="499" class="lb">y</text>
<rect class="in" x="1236.500" y="479.500" width="47" height="31" rx="15.500"/><text x="1260" y="499" class="vb">41</text>
<text x="908" y="541" class="l">Show</text>
<rect x="941.500" y="520.500" width="67" height="33" rx="4" fill="#fff" stroke="#d9d9d9"/><path d="M975.500 521v32" stroke="#d9d9d9"/>
<path d="M951 537.500c4-6 10-6 14 0-4 6-10 6-14 0z" fill="#4c97ff"/><circle cx="958" cy="537.500" r="2.800" fill="#fff"/><circle cx="958" cy="537.500" r="1.500" fill="#4c97ff"/>
<path d="M985 537.500c4-6 10-6 14 0-4 6-10 6-14 0z" fill="#a0a0a0"/><circle cx="992" cy="537.500" r="2.800" fill="#fff"/><path d="M987 544l10-13" stroke="#a0a0a0" stroke-width="1.500"/>
<text x="1045" y="541" class="l">Size</text>
<rect class="in" x="1073.500" y="521.500" width="63" height="31" rx="15.500"/><text x="1104.500" y="541" class="vb">150</text>
<text x="1173" y="541" class="l">Direction</text>
<rect class="in" x="1220.500" y="521.500" width="63" height="31" rx="15.500"/><text x="1252" y="541" class="vb">90</text>
<!-- add sprite -->
<circle cx="1258" cy="757" r="26" fill="#4c97ff" fill-opacity=".35"/><circle cx="1258" cy="757" r="22" fill="#4c97ff"/>
<path d="M1250.500 752l4 3h7l4-3v10.500a5 5 0 0 1-5 5h-5a5 5 0 0 1-5-5z" fill="#fff"/><circle cx="1255" cy="760" r=".9" fill="#4c97ff"/><circle cx="1261" cy="760" r=".9" fill="#4c97ff"/><path d="M1255.500 763.500c1.500 1 3.500 1 5 0" stroke="#4c97ff" fill="none"/><path d="M1268.500 745v6.500M1265.300 748.200h6.500" stroke="#fff" stroke-width="1.800"/>

<!-- stage pane -->
<path d="M1305.500 795V473a7.500 7.500 0 0 1 7.500-7.500h56a7.500 7.500 0 0 1 7.500 7.500V795z" fill="#fff" stroke="#c4ccd9"/>
<text x="1341" y="490.500" class="vb">Stage</text>
<path d="M1306 507.500h70" stroke="#e0e3e8"/>
<rect x="1310" y="513" width="62.500" height="46" rx="5" fill="#fff" stroke="#d9d9d9" stroke-width="2"/>
<text x="1341" y="581.500" class="lc">Backdrops</text><text x="1341" y="600.500" class="lc">3</text>
<circle cx="1341" cy="757.700" r="26" fill="#4c97ff" fill-opacity=".35"/><circle cx="1341" cy="757.700" r="22" fill="#4c97ff"/>
<rect x="1331.500" y="749" width="19" height="17" rx="2" fill="#fff"/><path d="M1333 763l4-5 3.500 3 3-2.500 5 4.500z" fill="#4c97ff" fill-opacity=".5"/><path d="M1350 744v6.500M1346.800 747.200h6.500" stroke="#fff" stroke-width="1.800"/>

<!-- right sidebar -->
<circle cx="1411" cy="21.500" r="5.800" fill="#dfe9f2" stroke="#555" stroke-width="1.800"/><path d="M1415 26l4.500 4.500" stroke="#c24dd8" stroke-width="2.500" stroke-linecap="round"/>
<path d="M1413 57l7 4v7l-7 4-7-4v-7z" fill="none" stroke="url(#cp)" stroke-width="3.500" stroke-linejoin="round"/>
<rect x="1409" y="96" width="12" height="15" rx="1" fill="#28a8ea"/><path d="M1409 103l6 4 6-4v8h-12z" fill="#0f5ea8"/><rect x="1405" y="100" width="10" height="10" rx="1" fill="#0a66c2"/><text x="1410" y="108.500" font-size="9px" font-weight="700" fill="#fff" text-anchor="middle">O</text>
<path d="M1413 141.500v12M1407 147.500h12" stroke="#333" stroke-width="1"/>
<rect x="1399" y="707" width="28" height="1" fill="#c4c4c4"/>
<rect x="1406.500" y="724.500" width="13" height="11.500" rx="2" fill="none" stroke="#222" stroke-width="1.200"/><path d="M1415 725v11" stroke="#222" stroke-width="1.200"/>
<circle cx="1413" cy="769.500" r="2.300" fill="none" stroke="#222" stroke-width="1.100"/><circle cx="1413" cy="769.500" r="6" fill="none" stroke="#222" stroke-width="1.100"/><circle cx="1413" cy="769.500" r="7" fill="none" stroke="#222" stroke-width="1.800" stroke-dasharray="3 2.500"/>
</svg>
</body></html>
